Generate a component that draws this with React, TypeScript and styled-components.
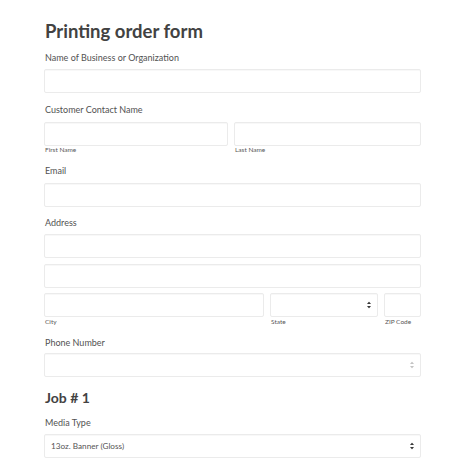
import React from 'react'
import styled, { createGlobalStyle } from 'styled-components'

const GlobalStyle = createGlobalStyle`
  html, body {
    margin: 0;
    padding: 0;
    background: #ffffff;
  }

  body {
    font-family: Lato, "Open Sans", "Liberation Sans", sans-serif;
    -webkit-font-smoothing: antialiased;
  }
`

const Page = styled.div`
  width: 474px;
  height: 472px;
  overflow: hidden;
  box-sizing: border-box;
  padding: 19px 0 0 44px;
`

const Form = styled.form`
  width: 377px;
  display: flex;
  flex-direction: column;
`

const Title = styled.h1`
  margin: 0 0 9px 1px;
  font-size: 18.5px;
  line-height: 24px;
  font-weight: 700;
  color: #424242;
`

const SectionTitle = styled.h2`
  margin: 0 0 10px 1px;
  font-size: 14px;
  line-height: 18px;
  font-weight: 700;
  color: #424242;
`

const Field = styled.div<{ $space?: number }>`
  display: flex;
  flex-direction: column;
  margin-bottom: ${p => p.$space ?? 11}px;
`

const Label = styled.label<{ $gap?: number }>`
  margin: 0 0 ${p => p.$gap ?? 5}px 1px;
  font-size: 9px;
  line-height: 12px;
  color: #525252;
`

const Lines = styled.div`
  display: flex;
  flex-direction: column;
  gap: 5.5px;
`

const Row = styled.div<{ $cols: string }>`
  display: grid;
  grid-template-columns: ${p => p.$cols};
  column-gap: 6px;
`

const Cell = styled.div`
  display: flex;
  flex-direction: column;
`

const SubLabel = styled.span<{ $top?: number }>`
  margin: ${p => p.$top ?? 0}px 0 0 1px;
  font-size: 6.5px;
  line-height: 8px;
  color: #585858;
`

const Box = styled.div`
  position: relative;
  height: 24px;
  box-sizing: border-box;
  border: 1px solid #ebebeb;
  border-radius: 2px;
  background: #ffffff;
  box-shadow: inset 0 1px 1px rgba(0, 0, 0, 0.03);
  display: flex;
  align-items: center;
  padding: 0 6px;
`

const BoxText = styled.span`
  flex: 1;
  font-size: 8.2px;
  color: #555555;
`

const ArrowsIcon = styled.svg<{ $faint?: boolean }>`
  position: absolute;
  right: 6px;
  top: 50%;
  transform: translateY(-50%);
  width: 4px;
  height: 7px;
  fill: ${p => (p.$faint ? '#c4c4c4' : '#3a3a3a')};
`

const Arrows: React.FC<{ faint?: boolean }> = ({ faint }) => (
  <ArrowsIcon viewBox="0 0 4 7" $faint={faint}>
    <path d="M2 0 L4 2.6 L0 2.6 Z" />
    <path d="M0 4.4 L4 4.4 L2 7 Z" />
  </ArrowsIcon>
)

const App: React.FC = () => (
  <Page>
    <GlobalStyle />
    <Form>
      <Title>Printing order form</Title>

      <Field>
        <Label>Name of Business or Organization</Label>
        <Box />
      </Field>

      <Field>
        <Label $gap={6}>Customer Contact Name</Label>
        <Row $cols="1fr 187px">
          <Cell>
            <Box />
            <SubLabel>First Name</SubLabel>
          </Cell>
          <Cell>
            <Box />
            <SubLabel>Last Name</SubLabel>
          </Cell>
        </Row>
      </Field>

      <Field $space={10}>
        <Label $gap={6}>Email</Label>
        <Box />
      </Field>

      <Field>
        <Label>Address</Label>
        <Lines>
          <Box />
          <Box />
          <Row $cols="1fr 108px 37px">
            <Cell>
              <Box />
              <SubLabel $top={1}>City</SubLabel>
            </Cell>
            <Cell>
              <Box>
                <Arrows />
              </Box>
              <SubLabel $top={1}>State</SubLabel>
            </Cell>
            <Cell>
              <Box />
              <SubLabel $top={1}>ZIP Code</SubLabel>
            </Cell>
          </Row>
        </Lines>
      </Field>

      <Field $space={12}>
        <Label $gap={4}>Phone Number</Label>
        <Box>
          <Arrows faint />
        </Box>
      </Field>

      <SectionTitle>Job # 1</SectionTitle>

      <Field>
        <Label>Media Type</Label>
        <Box>
          <BoxText>13oz. Banner (Gloss)</BoxText>
          <Arrows />
        </Box>
      </Field>
    </Form>
  </Page>
)

export default App
